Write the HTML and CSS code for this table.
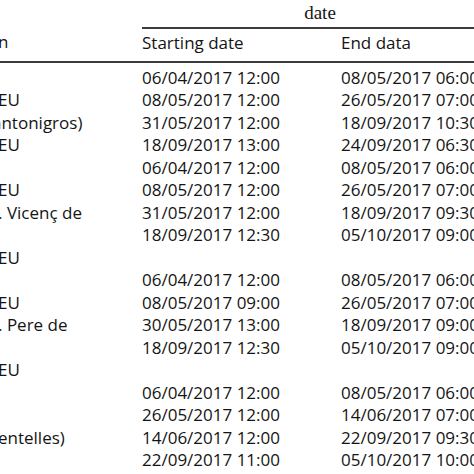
FILE: index.html
```html
<!DOCTYPE html>
<html>
<head>
<meta charset="utf-8">
<link rel="stylesheet" href="styles.css">
</head>
<body>
<div class="frame">
<table class="tbl">
  <colgroup>
    <col class="c-label">
    <col class="c-start">
    <col class="c-end">
  </colgroup>
  <thead>
    <tr class="h1">
      <th class="blank"></th>
      <th class="span" colspan="2">date</th>
    </tr>
    <tr class="h2">
      <th class="lab">n</th>
      <th>Starting date</th>
      <th>End data</th>
    </tr>
  </thead>
  <tbody>
    <tr class="first"><td class="lab"></td><td>06/04/2017 12:00</td><td>08/05/2017 06:00</td></tr>
    <tr><td class="lab">EU</td><td>08/05/2017 12:00</td><td>26/05/2017 07:00</td></tr>
    <tr><td class="lab"><span class="cut">antonigros)</span></td><td>31/05/2017 12:00</td><td>18/09/2017 10:30</td></tr>
    <tr><td class="lab">EU</td><td>18/09/2017 13:00</td><td>24/09/2017 06:30</td></tr>
    <tr><td class="lab"></td><td>06/04/2017 12:00</td><td>08/05/2017 06:00</td></tr>
    <tr><td class="lab">EU</td><td>08/05/2017 12:00</td><td>26/05/2017 07:00</td></tr>
    <tr><td class="lab">. Vicenç de</td><td>31/05/2017 12:00</td><td>18/09/2017 09:30</td></tr>
    <tr><td class="lab"></td><td>18/09/2017 12:30</td><td>05/10/2017 09:00</td></tr>
    <tr><td class="lab">EU</td><td></td><td></td></tr>
    <tr><td class="lab"></td><td>06/04/2017 12:00</td><td>08/05/2017 06:00</td></tr>
    <tr><td class="lab">EU</td><td>08/05/2017 09:00</td><td>26/05/2017 07:00</td></tr>
    <tr><td class="lab">. Pere de</td><td>30/05/2017 13:00</td><td>18/09/2017 09:00</td></tr>
    <tr><td class="lab"></td><td>18/09/2017 12:30</td><td>05/10/2017 09:00</td></tr>
    <tr><td class="lab">EU</td><td></td><td></td></tr>
    <tr><td class="lab"></td><td>06/04/2017 12:00</td><td>08/05/2017 06:00</td></tr>
    <tr><td class="lab"></td><td>26/05/2017 12:00</td><td>14/06/2017 07:00</td></tr>
    <tr><td class="lab">entelles)</td><td>14/06/2017 12:00</td><td>22/09/2017 09:30</td></tr>
    <tr><td class="lab"></td><td>22/09/2017 11:00</td><td>05/10/2017 10:00</td></tr>
  </tbody>
</table>
</div>
</body>
</html>
```
FILE: styles.css
```css
html, body {
  margin: 0;
  padding: 0;
  background: #fff;
  overflow: hidden;
}
body {
  width: 474px;
  height: 474px;
}
.frame {
  width: 474px;
  height: 474px;
  overflow: hidden;
}
.tbl {
  margin-left: -2px;
  border-collapse: collapse;
  table-layout: fixed;
  width: 500px;
  font-family: "Open Sans", "Noto Sans", sans-serif;
  font-size: 17px;
  color: #141414;
  white-space: nowrap;
}
.c-label { width: 144px; }
.c-start { width: 199px; }
.c-end { width: 157px; }
.tbl th, .tbl td {
  padding: 0;
  text-align: left;
  font-weight: normal;
  line-height: 22.5px;
  vertical-align: top;
}
.h1 th {
  height: 17px;
  line-height: 17px;
  padding-top: 4px;
  padding-bottom: 6px;
}
.h1 .span {
  text-align: center;
  font-family: "Liberation Serif", "Times New Roman", serif;
  font-size: 19px;
  border-bottom: 2px solid #3c3c3c;
}
.h2 th {
  padding-top: 3px;
  padding-bottom: 6px;
  border-bottom: 2px solid #3c3c3c;
}
.first td {
  padding-top: 4px;
}
.cut {
  display: inline-block;
  margin-left: -6px;
}
```
